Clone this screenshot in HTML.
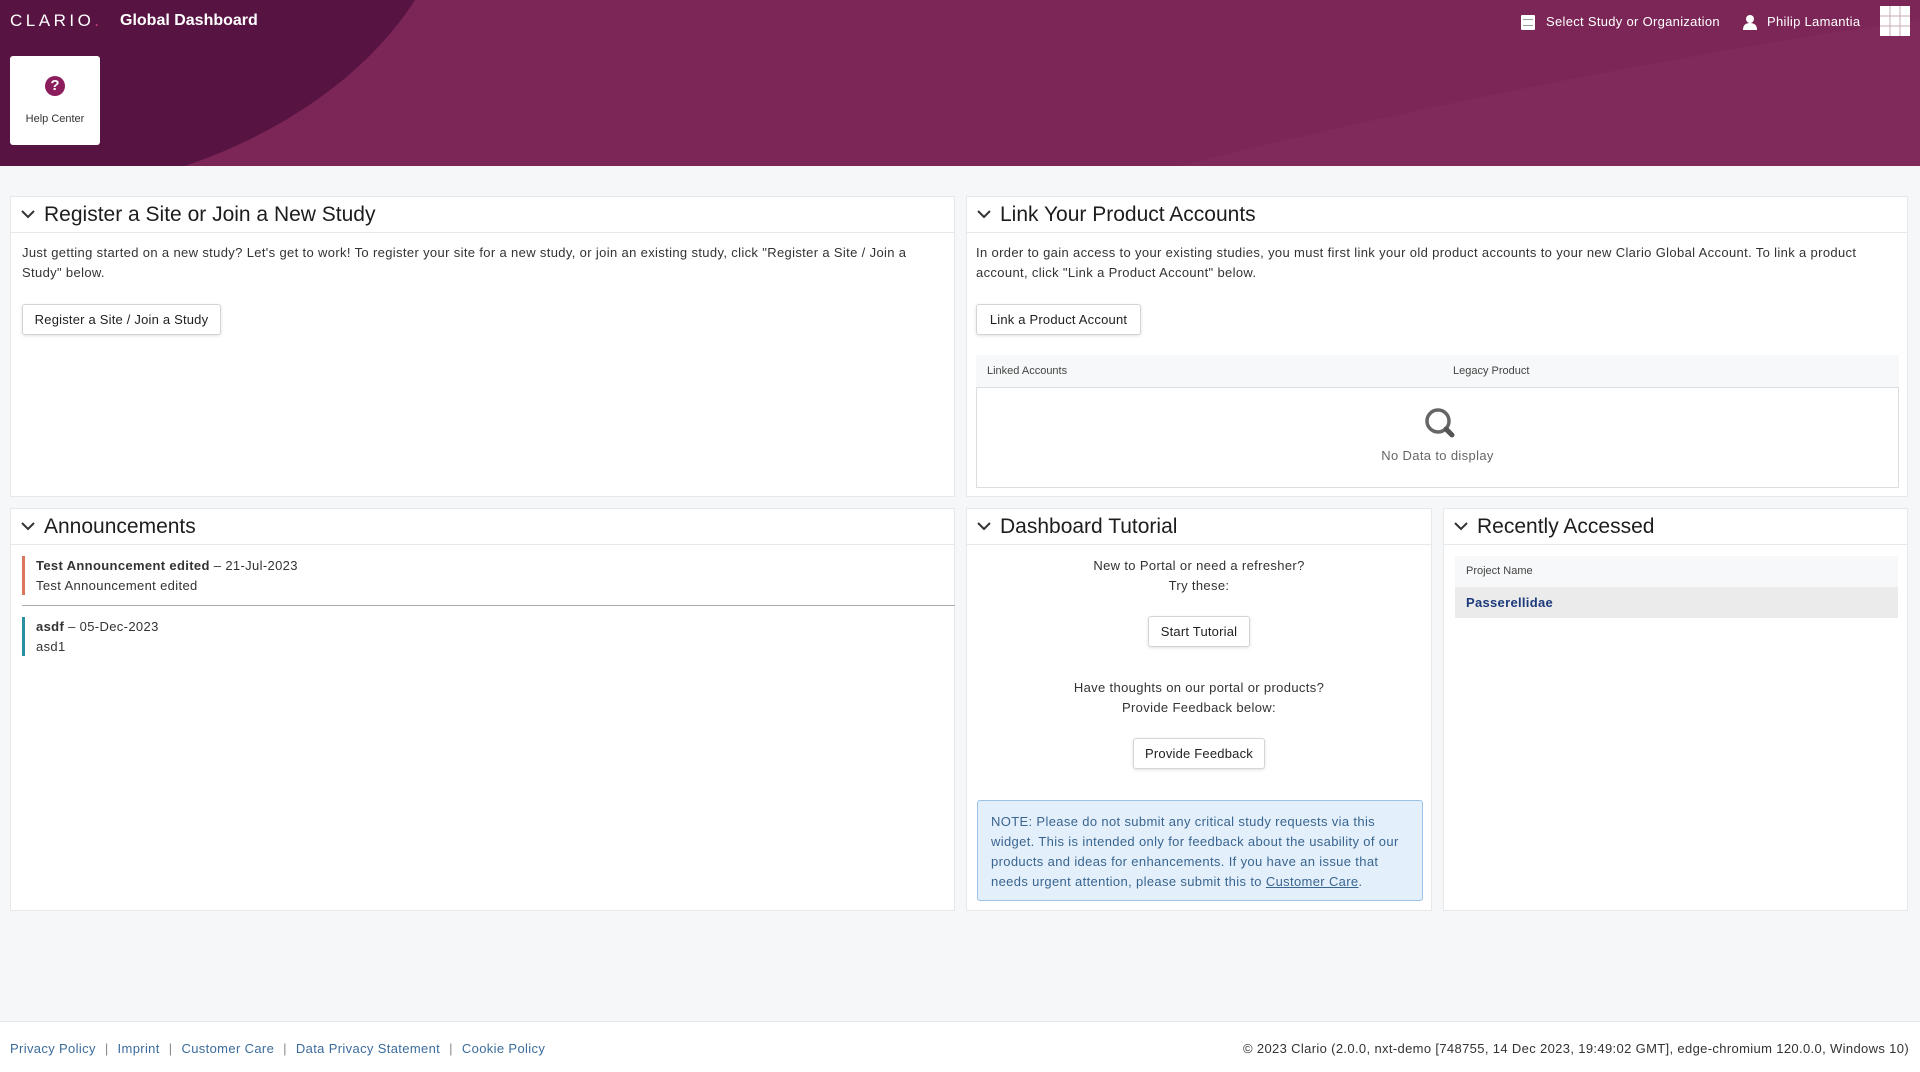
<!DOCTYPE html>
<html><head><meta charset="utf-8"><style>
*{box-sizing:border-box;margin:0;padding:0}
body{width:1920px;height:1072px;overflow:hidden;background:#f5f7f9;font-family:"Liberation Sans",sans-serif;color:#222;position:relative}
.hdr{position:absolute;left:0;top:0;width:1920px;height:166px;background:#7b2657;overflow:hidden}
.abs{position:absolute}
.panel{position:absolute;background:#fff;border:1px solid #e6e8ea}
.ph{height:36px;border-bottom:1px solid #e6e8ea;font-size:21px;line-height:35px;padding-left:33px;position:relative;color:#1d1d1d}
.ph svg{position:absolute;left:10px;top:13px}
.txt{font-size:13px;line-height:20px;color:#333;letter-spacing:.35px}
.btn{position:absolute;background:#fff;border:1px solid #d3d6d9;border-radius:3px;box-shadow:0 1px 3px rgba(0,0,0,.12);font-size:13px;line-height:29px;text-align:center;color:#222;letter-spacing:.2px}
.foot a{color:#3c6c9c;text-decoration:none}
.sep{color:#888;margin:0 9px}
</style></head><body>
<div class="hdr">
<svg width="1920" height="166" style="position:absolute;left:0;top:0">
<path d="M0 0 L415 0 C370 70 290 130 185 166 L0 166 Z" fill="#571443"/>
<path d="M1180 166 C1400 110 1700 50 1920 20 L1920 166 Z" fill="#852e5f" opacity=".5"/>
</svg>
<div class="abs" style="left:10px;top:11px;color:#fff;font-size:17px;letter-spacing:3.5px">CLARIO<span style="color:#d43a7a">.</span></div>
<div class="abs" style="left:120px;top:12px;color:#fff;font-size:16px;font-weight:bold">Global Dashboard</div>
<div class="abs" style="left:10px;top:56px;width:90px;height:89px;background:#fff;border-radius:3px">
<div class="abs" style="left:35px;top:20px;width:20px;height:20px;border-radius:50%;background:#8c1d5c;color:#fff;font-weight:bold;font-size:15px;line-height:20px;text-align:center">?</div>
<div class="abs" style="left:0;top:57px;width:90px;text-align:center;font-size:11px;color:#333">Help Center</div></div>
<div class="abs" style="left:1521px;top:15px;width:14px;height:15px;background:#fff;border-radius:1px"><div style="margin:4px 2px;height:7px;border-top:1px solid #999;border-bottom:1px solid #999"></div></div>
<div class="abs" style="left:1546px;top:14px;color:#fff;font-size:13px;letter-spacing:.3px">Select Study or Organization</div>
<svg class="abs" style="left:1743px;top:14px" width="14" height="16"><circle cx="7" cy="5" r="4" fill="#fff"/><path d="M0 16 Q0 9 7 9 Q14 9 14 16Z" fill="#fff"/></svg>
<div class="abs" style="left:1767px;top:14px;color:#fff;font-size:13px;letter-spacing:.3px">Philip Lamantia</div>
<svg class="abs" style="left:1880px;top:6px" width="30" height="30"><rect width="30" height="30" fill="#fff"/><path d="M10 0V30M20 0V30M0 10H30M0 20H30" stroke="#c9a9b8" stroke-width="1"/></svg>
</div>

<div class="panel" style="left:10px;top:196px;width:945px;height:301px">
<div class="ph"><svg width="14" height="9"><path d="M1 1L7 7L13 1" stroke="#333" stroke-width="2" fill="none"/></svg>Register a Site or Join a New Study</div>
<div class="txt" style="padding:10px 30px 0 11px">Just getting started on a new study? Let's get to work! To register your site for a new study, or join an existing study, click "Register a Site / Join a Study" below.</div>
<div class="btn" style="left:11px;top:107px;width:199px;height:31px">Register a Site / Join a Study</div>
</div>
<div class="panel" style="left:966px;top:196px;width:942px;height:301px">
<div class="ph"><svg width="14" height="9"><path d="M1 1L7 7L13 1" stroke="#333" stroke-width="2" fill="none"/></svg>Link Your Product Accounts</div>
<div class="txt" style="padding:10px 9px 0">In order to gain access to your existing studies, you must first link your old product accounts to your new Clario Global Account. To link a product account, click "Link a Product Account" below.</div>
<div class="btn" style="left:9px;top:107px;width:165px;height:31px">Link a Product Account</div>
<div class="abs" style="left:9px;top:158px;width:923px;height:32px;background:#f7f8f9;font-size:11px;line-height:32px;color:#444"><span class="abs" style="left:11px">Linked Accounts</span><span class="abs" style="left:477px">Legacy Product</span></div>
<div class="abs" style="left:9px;top:190px;width:923px;height:101px;border:1px solid #dcdfe2">
<svg class="abs" style="left:446px;top:19px" width="36" height="34"><circle cx="15" cy="14" r="11" stroke="#666" stroke-width="3.5" fill="none"/><path d="M23 22L29 28" stroke="#555" stroke-width="5" stroke-linecap="round"/></svg>
<div class="abs txt" style="left:0;top:58px;width:100%;text-align:center;color:#666">No Data to display</div></div>
</div>
<div class="panel" style="left:10px;top:508px;width:945px;height:403px">
<div class="ph"><svg width="14" height="9"><path d="M1 1L7 7L13 1" stroke="#333" stroke-width="2" fill="none"/></svg>Announcements</div>
<div class="abs" style="left:11px;top:47px;width:3px;height:39px;background:#d9775c"></div>
<div class="abs txt" style="left:25px;top:47px"><b>Test Announcement edited</b> – 21-Jul-2023<br>Test Announcement edited</div>
<div class="abs" style="left:11px;top:96px;width:933px;height:1px;background:#aaa"></div>
<div class="abs" style="left:11px;top:108px;width:3px;height:39px;background:#2a8fa5"></div>
<div class="abs txt" style="left:25px;top:108px"><b>asdf</b> – 05-Dec-2023<br>asd1</div>
</div>
<div class="panel" style="left:966px;top:508px;width:466px;height:403px">
<div class="ph"><svg width="14" height="9"><path d="M1 1L7 7L13 1" stroke="#333" stroke-width="2" fill="none"/></svg>Dashboard Tutorial</div>
<div class="abs txt" style="left:0;top:47px;width:100%;text-align:center">New to Portal or need a refresher?<br>Try these:</div>
<div class="btn" style="left:181px;top:107px;width:102px;height:31px">Start Tutorial</div>
<div class="abs txt" style="left:0;top:169px;width:100%;text-align:center">Have thoughts on our portal or products?<br>Provide Feedback below:</div>
<div class="btn" style="left:166px;top:229px;width:132px;height:31px">Provide Feedback</div>
<div class="abs txt" style="left:10px;top:291px;width:446px;height:101px;background:#e3f0fb;border:1px solid #9cc3e5;border-radius:3px;padding:11px 22px 11px 13px;color:#3a6590">NOTE: Please do not submit any critical study requests via this widget. This is intended only for feedback about the usability of our products and ideas for enhancements. If you have an issue that needs urgent attention, please submit this to <u>Customer Care</u>.</div>
</div>
<div class="panel" style="left:1443px;top:508px;width:465px;height:403px">
<div class="ph"><svg width="14" height="9"><path d="M1 1L7 7L13 1" stroke="#333" stroke-width="2" fill="none"/></svg>Recently Accessed</div>
<div class="abs" style="left:11px;top:47px;width:443px;height:31px;background:#f7f8f9;font-size:11px;line-height:31px;color:#444;padding-left:11px">Project Name</div>
<div class="abs" style="left:11px;top:78px;width:443px;height:31px;background:#ebebeb;font-size:13px;line-height:31px;color:#1d3a7a;font-weight:bold;padding-left:11px;letter-spacing:.3px">Passerellidae</div>
</div>
<div class="abs foot" style="left:0;top:1021px;width:1920px;height:51px;background:#fff;border-top:1px solid #e6e8ea;font-size:13px;letter-spacing:.35px">
<div class="abs" style="left:10px;top:19px;color:#3c6c9c"><a>Privacy Policy</a><span class="sep">|</span><a>Imprint</a><span class="sep">|</span><a>Customer Care</a><span class="sep">|</span><a>Data Privacy Statement</a><span class="sep">|</span><a>Cookie Policy</a></div>
<div class="abs" style="right:11px;top:19px;color:#333">© 2023 Clario (2.0.0, nxt-demo [748755, 14 Dec 2023, 19:49:02 GMT], edge-chromium 120.0.0, Windows 10)</div>
</div>
</body></html>
